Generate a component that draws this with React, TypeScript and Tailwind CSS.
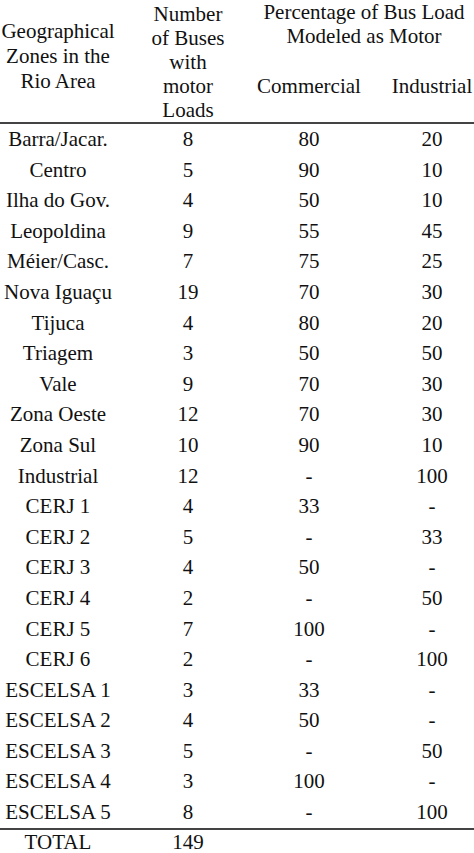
const rows: [string, string, string, string][] = [
  ["Barra/Jacar.", "8", "80", "20"],
  ["Centro", "5", "90", "10"],
  ["Ilha do Gov.", "4", "50", "10"],
  ["Leopoldina", "9", "55", "45"],
  ["Méier/Casc.", "7", "75", "25"],
  ["Nova Iguaçu", "19", "70", "30"],
  ["Tijuca", "4", "80", "20"],
  ["Triagem", "3", "50", "50"],
  ["Vale", "9", "70", "30"],
  ["Zona Oeste", "12", "70", "30"],
  ["Zona Sul", "10", "90", "10"],
  ["Industrial", "12", "-", "100"],
  ["CERJ 1", "4", "33", "-"],
  ["CERJ 2", "5", "-", "33"],
  ["CERJ 3", "4", "50", "-"],
  ["CERJ 4", "2", "-", "50"],
  ["CERJ 5", "7", "100", "-"],
  ["CERJ 6", "2", "-", "100"],
  ["ESCELSA 1", "3", "33", "-"],
  ["ESCELSA 2", "4", "50", "-"],
  ["ESCELSA 3", "5", "-", "50"],
  ["ESCELSA 4", "3", "100", "-"],
  ["ESCELSA 5", "8", "-", "100"],
];

export default function App() {
  return (
    <div className="w-[474px] bg-white text-[#111] text-[21px] [font-family:'Liberation_Serif','Times_New_Roman',serif]">
      {/* header */}
      <div className="flex h-[124px] border-b-2 border-[#444]">
        <div className="w-[148px] pr-[32px] pt-[19px] text-center leading-[25px] whitespace-nowrap">
          <div>Geographical</div>
          <div>Zones in the</div>
          <div>Rio Area</div>
        </div>
        <div className="w-[80px] pt-[2px] text-center leading-[24px]">
          <div>Number</div>
          <div className="whitespace-nowrap">of Buses</div>
          <div>with</div>
          <div>motor</div>
          <div>Loads</div>
        </div>
        <div className="w-[246px]">
          <div className="pl-[26px] text-center leading-[24px] whitespace-nowrap">
            <div>Percentage of Bus Load</div>
            <div>Modeled as Motor</div>
          </div>
          <div className="mt-[26px] flex leading-[24px]">
            <div className="w-[162px] text-center">Commercial</div>
            <div className="w-[84px] text-center">Industrial</div>
          </div>
        </div>
      </div>

      {/* body */}
      <div className="border-b-2 border-[#444]">
        {rows.map((r) => (
          <div key={r[0]} className="flex leading-[30.6px]">
            <div className="w-[148px] pr-[32px] text-center whitespace-nowrap">{r[0]}</div>
            <div className="w-[80px] text-center">{r[1]}</div>
            <div className="w-[162px] text-center">{r[2]}</div>
            <div className="w-[84px] text-center">{r[3]}</div>
          </div>
        ))}
      </div>

      <div className="flex leading-[24px]">
        <div className="w-[148px] pr-[32px] text-center">TOTAL</div>
        <div className="w-[80px] text-center">149</div>
      </div>
    </div>
  );
}
